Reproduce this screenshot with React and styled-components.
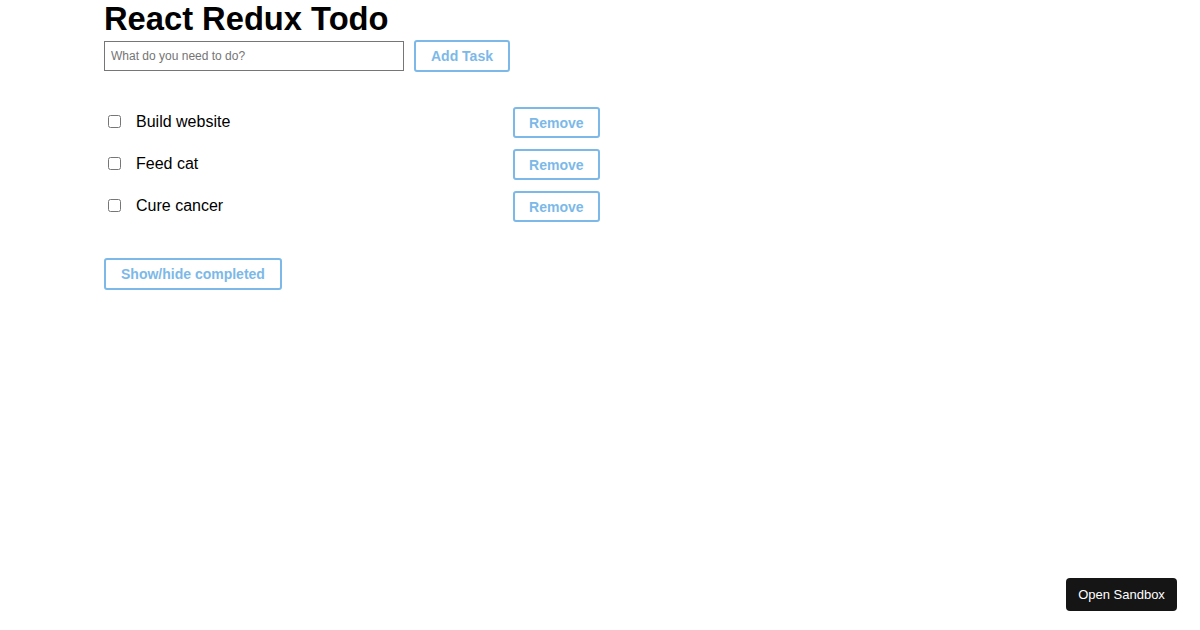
import React, { useState } from "react";
import styled, { createGlobalStyle } from "styled-components";

const Global = createGlobalStyle`
  html, body { margin: 0; padding: 0; background: #fff; }
  body { font-family: "Liberation Sans", Arial, sans-serif; color: #000; }
`;

const Page = styled.div`
  padding: 0 104px;
`;

const Title = styled.h1`
  margin: 0 0 3px;
  font-size: 32.7px;
  font-weight: 700;
  line-height: 37px;
`;

const Form = styled.form`
  display: flex;
  align-items: center;
  gap: 10px;
  height: 32px;
`;

const Input = styled.input`
  box-sizing: border-box;
  width: 300px;
  height: 30px;
  margin: 0;
  padding: 0 6px;
  border: 1px solid #767676;
  border-radius: 0;
  font-family: "Liberation Sans", Arial, sans-serif;
  font-size: 12px;
  &::placeholder { color: #757575; }
`;

const Button = styled.button`
  box-sizing: border-box;
  height: ${(p) => p.$h || 32}px;
  margin: 0;
  padding: 0 ${(p) => p.$px || 15}px;
  background: #fff;
  border: 2px solid #7cb9e8;
  border-radius: 3px;
  color: #7cb9e8;
  font-family: "Liberation Sans", Arial, sans-serif;
  font-size: 14px;
  font-weight: 700;
  cursor: pointer;
`;

const List = styled.ul`
  list-style: none;
  margin: 35px 0 0;
  padding: 0;
  display: flex;
  flex-direction: column;
  gap: 11px;
  width: 496px;
`;

const Row = styled.li`
  display: flex;
  align-items: center;
  justify-content: space-between;
  height: 31px;
`;

const Label = styled.label`
  display: flex;
  align-items: center;
  gap: 12px;
  font-size: 16px;
  margin-top: -2px;
`;

const Check = styled.input`
  width: 13px;
  height: 13px;
  margin: 3px 3px 3px 4px;
`;

const Footer = styled.div`
  margin-top: 36px;
`;

const Sandbox = styled.a`
  position: fixed;
  right: 23px;
  bottom: 19px;
  box-sizing: border-box;
  width: 111px;
  height: 33px;
  display: flex;
  align-items: center;
  justify-content: center;
  background: #151515;
  color: #fff;
  border-radius: 4px;
  font-family: "Liberation Sans", Arial, sans-serif;
  font-size: 13px;
  text-decoration: none;
`;

const initial = ["Build website", "Feed cat", "Cure cancer"];

export default function App() {
  const [todos] = useState(initial);
  return (
    <>
      <Global />
      <Page>
        <Title>React Redux Todo</Title>
        <Form onSubmit={(e) => e.preventDefault()}>
          <Input placeholder="What do you need to do?" />
          <Button type="submit">Add Task</Button>
        </Form>
        <List>
          {todos.map((t) => (
            <Row key={t}>
              <Label>
                <Check type="checkbox" />
                {t}
              </Label>
              <Button $h={31} $px={14.5}>Remove</Button>
            </Row>
          ))}
        </List>
        <Footer>
          <Button>Show/hide completed</Button>
        </Footer>
      </Page>
      <Sandbox href="#">Open Sandbox</Sandbox>
    </>
  );
}
